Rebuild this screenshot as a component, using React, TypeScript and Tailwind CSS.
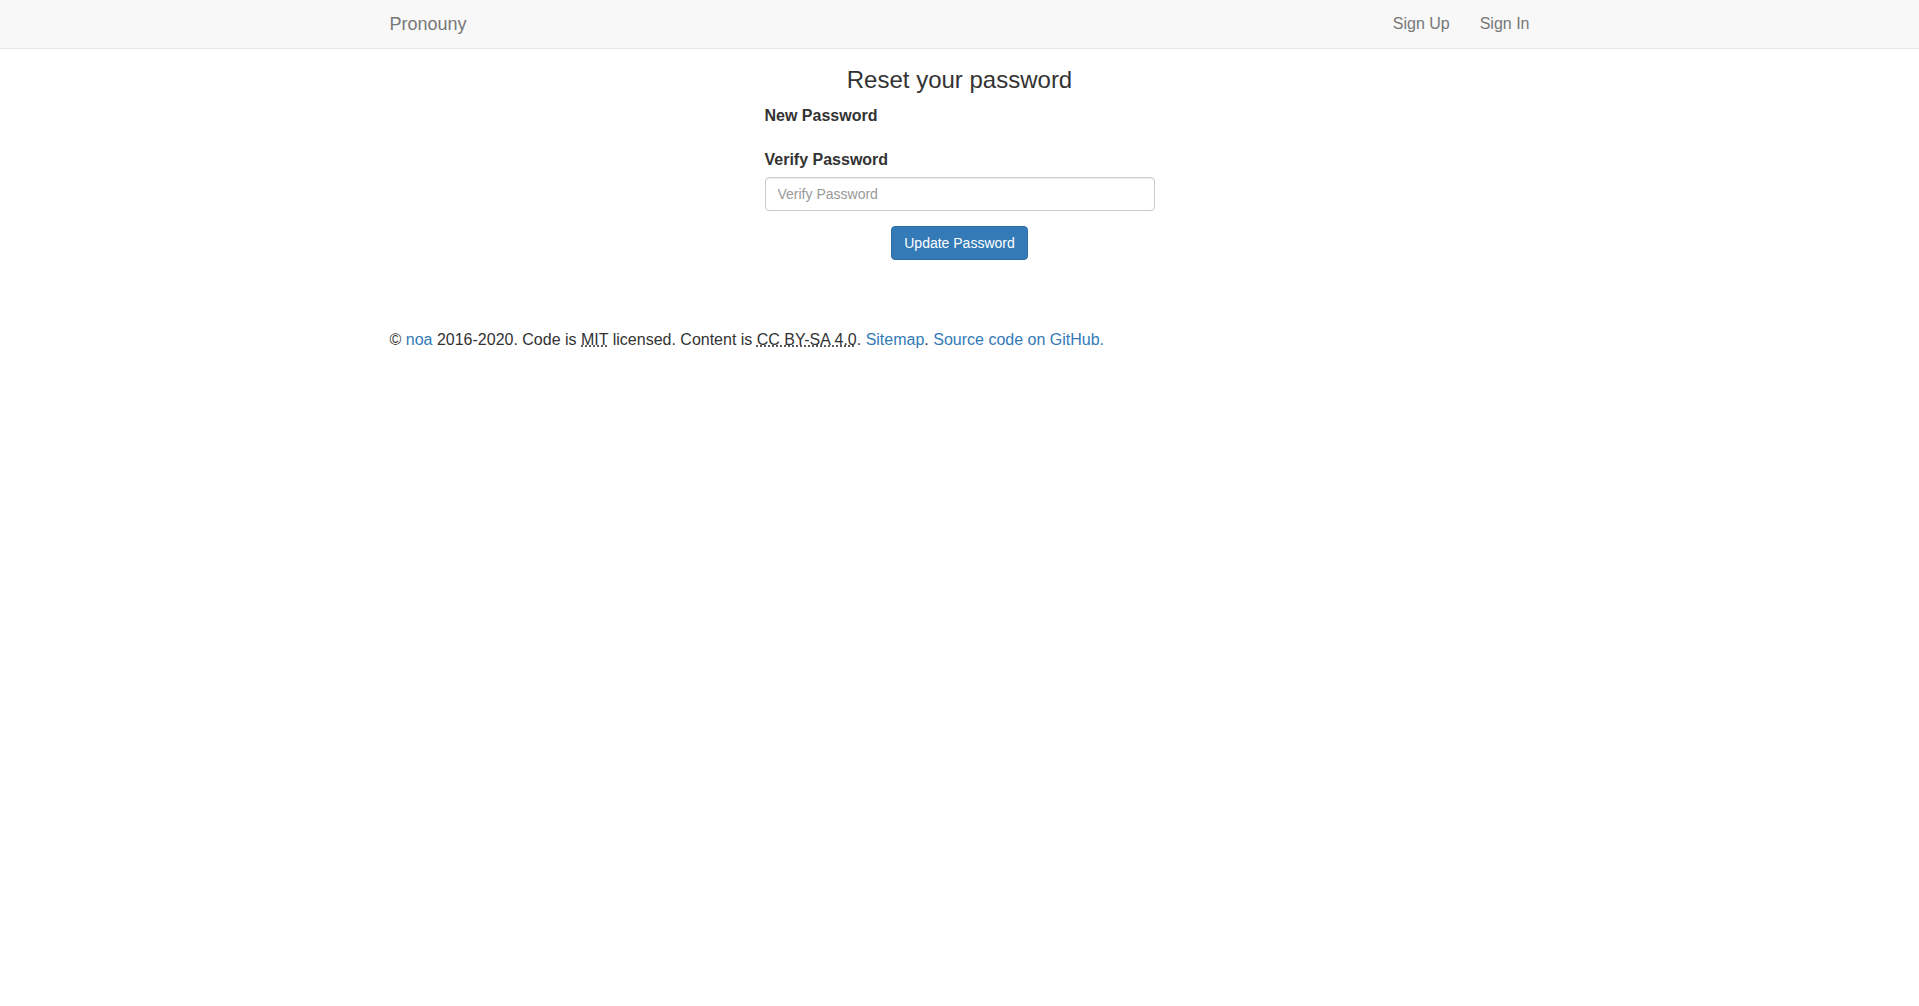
export default function App() {
  return (
    <div className="min-h-screen bg-white font-['Liberation_Sans',Arial,sans-serif] text-[16px] text-[#333]">
      {/* Navbar */}
      <nav className="h-[49px] border-b border-[#e7e7e7] bg-[#f8f8f8]">
        <div className="mx-auto flex h-full w-[1170px] items-center justify-between px-[15px]">
          <a href="#" className="-mt-px text-[18px] leading-[20px] text-[#777]">
            Pronouny
          </a>
          <ul className="-mr-[15px] -mt-[2px] flex items-center">
            <li>
              <a href="#" className="block px-[15px] leading-[23px] text-[#777]">
                Sign Up
              </a>
            </li>
            <li>
              <a href="#" className="block px-[15px] leading-[23px] text-[#777]">
                Sign In
              </a>
            </li>
          </ul>
        </div>
      </nav>

      <div className="mx-auto w-[1170px] px-[15px]">
        {/* Reset form */}
        <div className="mx-auto w-[390px] pt-[18px]">
          <h3 className="mb-[11px] text-center text-[24px] leading-[26px]">
            Reset your password
          </h3>
          <div className="mb-[21px]">
            <label className="mb-[5px] block text-[16px] font-bold leading-[23px]">
              New Password
            </label>
          </div>
          <div className="mb-[15px]">
            <label className="mb-[6px] block text-[16px] font-bold leading-[23px]">
              Verify Password
            </label>
            <input
              type="password"
              placeholder="Verify Password"
              className="block h-[34px] w-full rounded-[4px] border border-[#ccc] bg-white px-[12px] py-[6px] text-[14px] text-[#555] shadow-[inset_0_1px_1px_rgba(0,0,0,0.075)] outline-none placeholder:text-[#999]"
            />
          </div>
          <div className="flex justify-center">
            <button
              type="button"
              className="h-[34px] rounded-[4px] border border-[#2e6da4] bg-[#337ab7] px-[12px] text-[14px] leading-[20px] text-white"
            >
              Update Password
            </button>
          </div>
        </div>

        {/* Footer */}
        <footer className="mt-[68px] leading-[23px]">
          ©{" "}
          <a href="#" className="text-[#337ab7]">
            noa
          </a>{" "}
          2016-2020. Code is <abbr title="MIT License">MIT</abbr> licensed.
          Content is{" "}
          <abbr title="Creative Commons Attribution-ShareAlike 4.0">
            CC BY-SA 4.0
          </abbr>
          .{" "}
          <a href="#" className="text-[#337ab7]">
            Sitemap
          </a>
          .{" "}
          <a href="#" className="text-[#337ab7]">
            Source code on GitHub.
          </a>
        </footer>
      </div>
    </div>
  );
}
